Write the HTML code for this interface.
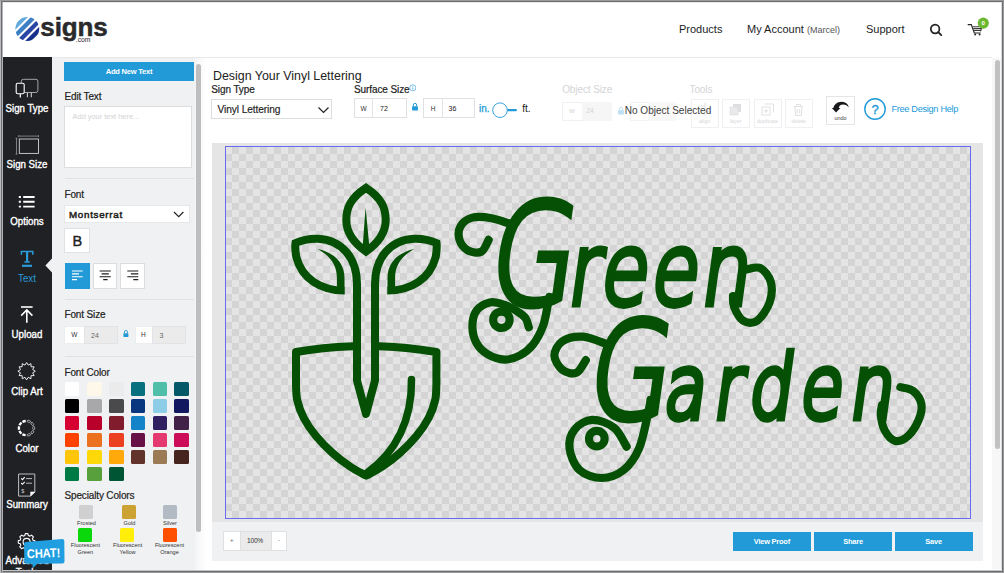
<!DOCTYPE html>
<html lang="en">
<head>
<meta charset="utf-8">
<title>Design Your Vinyl Lettering - Signs.com</title>
<style>
*{box-sizing:border-box;margin:0;padding:0}
html,body{width:1004px;height:573px;overflow:hidden;background:#fff}
body{position:relative;font-family:"Liberation Sans",sans-serif;color:#222;font-size:10px}
.abs{position:absolute}
.fr{z-index:60}
/* window frame */
/* header */
#header{left:2px;top:2px;width:999px;height:56px;background:#fff}
#hline{left:52px;top:57px;width:940px;height:1px;background:#e6e7e9}
.nav{top:22px;font-size:11px;color:#1d1d1f;white-space:nowrap;line-height:14px}
.nav small{font-size:9px;color:#555}
/* sidebar */
#side{left:2px;top:57.300px;width:50px;height:513.300px;background:#1f2125}
.sitem{left:-3px;width:60px;text-align:center;color:#fff;font-size:10px;line-height:12px;white-space:nowrap;-webkit-text-stroke:0.35px #fff;transform:scaleX(0.97)}
.sitem.on{color:#2a9bd8;-webkit-text-stroke:0}
.sicon{left:2px;width:50px}
/* left panel */
#lpanel{left:52px;top:58px;width:152px;height:512px;background:#f0f1f3}
.lbl{left:64.5px;font-size:10px;color:#222;line-height:12px;white-space:nowrap;-webkit-text-stroke:0.2px #222;letter-spacing:-0.15px}
.hr{left:64.500px;width:129px;height:1px;background:#e1e2e4}
.sw{height:14.200px;border-radius:1.500px}
.ssw{width:14px;height:14px;border-radius:1.500px}
.stx{font-size:5.600px;line-height:7px;color:#333;text-align:center;width:40px;white-space:nowrap}
.tl{font-size:10px;line-height:12px;color:#222;white-space:nowrap;-webkit-text-stroke:0.2px #222;letter-spacing:-0.1px}
.tb{top:99.300px;width:28px;height:29px;border:1px solid #f0f0f2;background:#fff}
.tt{top:118.300px;width:28px;text-align:center;font-size:5.300px;line-height:6px;color:#d6d6d8}
.word{-webkit-text-stroke:7px #055005;font-family:"DejaVu Sans","Liberation Sans",sans-serif;font-weight:200;font-style:normal;color:#055005;line-height:1;white-space:nowrap;transform-origin:0 100%;paint-order:stroke fill}
#w1::first-letter{font-size:140px;letter-spacing:-6px}
#w2::first-letter{font-size:134px;letter-spacing:-5px}
/* main */
#mpanel{left:204px;top:58px;width:779px;height:502.500px;background:#fff}
#cwrap{left:212.200px;top:143px;width:770.800px;height:378.500px;background:#e5e5e5}
#board{left:225.400px;top:146px;width:746px;height:373.200px;border:1px solid #6a6af0;
 background-color:#e4e4e4;
 background-image:linear-gradient(45deg,#d4d4d4 25%,transparent 25%,transparent 75%,#d4d4d4 75%),linear-gradient(45deg,#d4d4d4 25%,transparent 25%,transparent 75%,#d4d4d4 75%);
 background-size:14px 14px;background-position:-1px 0,6px 7px}
#bbar{left:212.200px;top:521.500px;width:770.800px;height:39px;background:#f0f1f3}
.btn{top:531.500px;height:19px;background:#219ad7;color:#fff;font-size:7.400px;line-height:19px;text-align:center;font-weight:bold;letter-spacing:-0.200px}
#vtrack{left:992px;top:58px;width:9.500px;height:511px;background:#f7f7f7}
</style>
</head>
<body>
<div id="header" class="abs"></div>
<div id="hline" class="abs"></div>
<div id="side" class="abs"></div>
<div id="lpanel" class="abs"></div>
<div id="mpanel" class="abs"></div>
<div id="cwrap" class="abs"></div>
<div id="board" class="abs"></div>
<div id="bbar" class="abs"></div>
<div id="vtrack" class="abs"></div>
<div class="abs" style="left:995px;top:60px;width:5px;height:389px;border-radius:2.500px;background:#c1c1c1"></div>
<!--HEADER-->
<svg class="abs" style="left:14px;top:16px" width="27" height="27" viewBox="0 0 27 27">
 <defs><clipPath id="lc"><circle cx="13.3" cy="13" r="11.9"/></clipPath></defs>
 <g clip-path="url(#lc)" transform="rotate(-45 13.3 13)">
  <rect x="0" y="0.700" width="27" height="4.300" fill="#62a9dc"/>
  <rect x="0" y="7.100" width="27" height="4.300" fill="#3d7fc4"/>
  <rect x="0" y="13.500" width="27" height="4.300" fill="#2a46a4"/>
  <rect x="0" y="19.900" width="27" height="4.300" fill="#16308c"/>
 </g>
</svg>
<div class="abs" style="left:40.300px;top:12px;font-size:26px;line-height:30px;font-weight:bold;color:#2a2a2c;letter-spacing:-0.100px;-webkit-text-stroke:0.500px #2a2a2c">signs</div>
<div class="abs" style="left:75.800px;top:35.500px;font-size:6.800px;line-height:8px;color:#2a2a2c">.com</div>
<div class="abs nav" style="left:679px">Products</div>
<div class="abs nav" style="left:747px">My Account <small>(Marcel)</small></div>
<div class="abs nav" style="left:866px">Support</div>
<svg class="abs" style="left:929px;top:22.700px" width="15" height="15" viewBox="0 0 15 15"><circle cx="6.100" cy="6" r="4.300" fill="none" stroke="#222" stroke-width="1.700"/><path d="M9.300 9.200 L12.200 12.100" stroke="#222" stroke-width="1.900" stroke-linecap="round"/></svg>
<svg class="abs" style="left:966px;top:17px" width="24" height="22" viewBox="0 0 24 22">
 <path d="M1.700 7.600 H5.300 L8.300 16 H14.600" fill="none" stroke="#222" stroke-width="1.100" stroke-linejoin="miter"/>
 <path d="M6.600 9.700 H16 M7.200 11.500 H15.400 M7.800 13.300 H14.900" stroke="#3a3a3c" stroke-width="1.150"/>
 <path d="M16.100 9.300 L14.600 14.400" stroke="#222" stroke-width="1"/>
 <circle cx="9.200" cy="17.500" r="0.950" fill="#222"/><circle cx="13.600" cy="17.500" r="0.950" fill="#222"/>
 <circle cx="17.300" cy="6.100" r="5.600" fill="#6cb830"/>
 <text x="17.300" y="8.300" font-family="Liberation Sans, sans-serif" font-size="6.200" font-weight="bold" fill="#fff" text-anchor="middle">0</text>
</svg>
<!--SIDEBAR-->
<svg class="abs" style="left:0;top:58px" width="54" height="515" viewBox="0 58 54 515" fill="none" stroke="#fff">
 <!-- sign type -->
 <rect x="21.300" y="79.300" width="16.600" height="13.200" rx="2" stroke-width="0.900" stroke="#b4b4b6"/>
 <rect x="16.2" y="83.3" width="8" height="10.4" rx="1.5" stroke-width="1.1" fill="#1f2125"/>
 <path d="M20.300 94v3.600" stroke-width="1.200"/><path d="M27.400 92.800v4.400 M31.300 92.800v4.400" stroke-width="1.100" stroke="#d0d0d2"/>
 <!-- sign size -->
 <rect x="19.300" y="139" width="19.200" height="14.400" stroke-width="0.900" stroke="#d4d4d6"/>
 <path d="M18.600 136.100h20 M16.500 138.200v16" stroke-width="0.600" stroke="#bdbdbf"/><path d="M18.700 135v2.200 M38.500 135v2.200 M15.400 138.300h2.200 M15.400 154.100h2.200" stroke-width="0.500" stroke="#bdbdbf"/>
 <!-- options -->
 <path d="M23.2 197h11.4 M23.2 201.8h11.4 M23.2 206.6h11.4" stroke-width="1.9"/>
 <path d="M18.8 197h2.1 M18.8 201.8h2.1 M18.8 206.6h2.1" stroke-width="1.9"/>
 <!-- text -->
 <path d="M21.400 254.800v-3.300h11.400v3.300 M24.400 262h5.400" stroke="#2a9bd8" stroke-width="1.500"/><path d="M27.100 251.300v10.600" stroke="#2a9bd8" stroke-width="2.200"/>
 <path d="M22 265.8h10" stroke="#2a9bd8" stroke-width="2.2"/>
 <path d="M52 258.5 L45.4 265.5 L52 272.5Z" fill="#f0f1f3" stroke="none"/>
 <!-- upload -->
 <path d="M21 307h11.6" stroke-width="1.6"/>
 <path d="M26.8 322.8v-12 M21.2 315.6l5.6-5.6 5.6 5.6" stroke-width="1.6"/>
 <!-- clip art -->
 <path d="M26.60 362.50 L28.23 365.11 L30.95 363.67 L31.05 366.75 L34.13 366.85 L32.69 369.57 L35.30 371.20 L32.69 372.83 L34.13 375.55 L31.05 375.65 L30.95 378.73 L28.23 377.29 L26.60 379.90 L24.97 377.29 L22.25 378.73 L22.15 375.65 L19.07 375.55 L20.51 372.83 L17.90 371.20 L20.51 369.57 L19.07 366.85 L22.15 366.75 L22.25 363.67 L24.97 365.11Z" stroke-width="0.900" stroke-linejoin="miter"/>
 <!-- color -->
 <path d="M26.00 421.00 A7.10 7.10 0 0 0 26.00 435.20" stroke-width="2.300" stroke-dasharray="3.400 1.120" stroke-dashoffset="-0.300"/>
 <ellipse cx="28.79" cy="421.35" rx="1.75" ry="1.05" transform="rotate(18.0 28.79 421.35)" stroke-width="0.600" stroke="#e8e8e8"/><ellipse cx="32.34" cy="423.93" rx="1.75" ry="1.05" transform="rotate(54.0 32.34 423.93)" stroke-width="0.600" stroke="#e8e8e8"/><ellipse cx="33.70" cy="428.10" rx="1.75" ry="1.05" transform="rotate(90.0 33.70 428.10)" stroke-width="0.600" stroke="#e8e8e8"/><ellipse cx="32.34" cy="432.27" rx="1.75" ry="1.05" transform="rotate(126.0 32.34 432.27)" stroke-width="0.600" stroke="#e8e8e8"/><ellipse cx="28.79" cy="434.85" rx="1.75" ry="1.05" transform="rotate(162.0 28.79 434.85)" stroke-width="0.600" stroke="#e8e8e8"/>
 <!-- summary -->
 <path d="M18.600 474h16.200v17.900l-4.200 4.200h-12z" stroke-width="0.900" stroke="#cfcfd1"/>
 <path d="M30.600 496.100v-4.200h4.200z" fill="#fff" stroke-width="0.500"/>
 <path d="M26 478.600h6 M26 483.200h6" stroke-width="0.800" stroke="#e0e0e0"/>
 <path d="M21.200 478.400l1.300 1.300 2.200-2.500 M21.200 483l1.300 1.300 2.200-2.500" stroke-width="1.100"/>
 <text x="21.200" y="492.600" font-family="Liberation Sans, sans-serif" font-size="5.500" fill="#cfcfd1" stroke="none">$</text>
 <!-- gear -->
 <path d="M34.90 540.59 L34.90 543.21 L33.09 543.57 L32.37 545.31 L33.40 546.84 L31.54 548.70 L30.01 547.67 L28.27 548.39 L27.91 550.20 L25.29 550.20 L24.93 548.39 L23.19 547.67 L21.66 548.70 L19.80 546.84 L20.83 545.31 L20.11 543.57 L18.30 543.21 L18.30 540.59 L20.11 540.23 L20.83 538.49 L19.80 536.96 L21.66 535.10 L23.19 536.13 L24.93 535.41 L25.29 533.60 L27.91 533.60 L28.27 535.41 L30.01 536.13 L31.54 535.10 L33.40 536.96 L32.37 538.49 L33.09 540.23Z" stroke-width="1.100" stroke-linejoin="round"/>
 <circle cx="26.600" cy="541.900" r="3.500" stroke-width="1.100"/>
</svg>
<div class="abs sitem" style="top:102.5px">Sign Type</div>
<div class="abs sitem" style="top:159.0px">Sign Size</div>
<div class="abs sitem" style="top:215.5px">Options</div>
<div class="abs sitem on" style="top:272.5px;font-weight:normal">Text</div>
<div class="abs sitem" style="top:329.0px">Upload</div>
<div class="abs sitem" style="top:385.5px">Clip Art</div>
<div class="abs sitem" style="top:442.5px">Color</div>
<div class="abs sitem" style="top:499.0px">Summary</div>
<div class="abs sitem" style="top:554.800px">Advanced<br>Tools</div>
<div class="abs" id="chat" style="left:22px;top:536px;width:46px;height:35px;z-index:5">
 <svg width="46" height="35" viewBox="22 536 46 35"><path d="M25.800 542.100 L62.200 539.100 Q64.200 539 64.300 541 L64.500 561.600 Q64.500 563.600 62.500 563.600 L37.200 563.700 L32.800 568.300 L32.400 563.700 L26.300 563.700 Q24.300 563.700 24.300 561.700 L24.100 544 Q24.100 542.200 25.800 542.100Z" fill="#219ee0"/>
 <text x="43.500" y="557.600" font-family="Liberation Sans, sans-serif" font-size="12.600" font-weight="bold" fill="#fff" text-anchor="middle" textLength="33.500" lengthAdjust="spacingAndGlyphs" transform="rotate(-2 43.500 553)">CHAT!</text></svg>
</div>
<!--LEFT-->
<div class="abs" style="left:194.500px;top:58px;width:10px;height:512px;background:linear-gradient(90deg,#f3f4f5,#f9f9fa 40%,#fdfdfd)"></div>
<div class="abs" style="left:196px;top:63.500px;width:5px;height:468px;border-radius:2.500px;background:#bebebe"></div>
<div class="abs" style="left:64px;top:62px;width:130px;height:19px;background:#219ad7;color:#fff;font-size:7.500px;line-height:19px;font-weight:bold;text-align:center;letter-spacing:-0.200px">Add New Text</div>
<div class="abs lbl" style="top:91px">Edit Text</div>
<div class="abs" style="left:64.200px;top:106.300px;width:127.600px;height:62.200px;background:#fff;border:1px solid #dcdddf"></div>
<div class="abs" style="left:72.600px;top:111.500px;font-size:7.400px;line-height:9px;color:#d2d2d4;white-space:nowrap">Add your text here...</div>
<div class="abs hr" style="top:178px"></div>
<div class="abs lbl" style="top:189px">Font</div>
<div class="abs" style="left:64.300px;top:204.700px;width:126px;height:18.700px;background:#fff;border:1px solid #e6e7e9"></div>
<div class="abs" style="left:69px;top:208.500px;font-size:9.800px;line-height:12px;color:#222;-webkit-text-stroke:0.500px #222;letter-spacing:0.700px">Montserrat</div>
<svg class="abs" style="left:172px;top:209px" width="14" height="10" viewBox="0 0 14 10"><path d="M2 3 L6.700 7.600 L11.400 3" fill="none" stroke="#222" stroke-width="1.200"/></svg>
<div class="abs" style="left:64.300px;top:228.300px;width:25.500px;height:25px;background:#fff;border:1px solid #e0e1e3"></div>
<div class="abs" style="left:64.500px;top:232.500px;width:25.500px;text-align:center;font-size:14.500px;line-height:17px;color:#222;-webkit-text-stroke:0.400px #222">B</div>
<div class="abs" style="left:64.500px;top:263px;width:25.500px;height:25.500px;background:#219ad7"></div>
<div class="abs" style="left:92.800px;top:263px;width:24.700px;height:25.500px;background:#fff;border:1px solid #dcdddf"></div>
<div class="abs" style="left:120.400px;top:263px;width:24.700px;height:25.500px;background:#fff;border:1px solid #dcdddf"></div>
<svg class="abs" style="left:64px;top:262px" width="84" height="28" viewBox="64 262 84 28" fill="none" stroke-width="1.150">
 <path d="M72 271h10.700 M72 273.850h7 M72 276.700h10.700 M72 279.550h5" stroke="#fff"/>
 <path d="M99.600 271h11.200 M101.600 273.850h7.200 M99.600 276.700h11.200 M103.200 279.550h4.400" stroke="#1c1c1e"/>
 <path d="M127.300 271h11 M130.900 273.850h7.400 M127.300 276.700h11 M133.300 279.550h5" stroke="#1c1c1e"/>
</svg>
<div class="abs hr" style="top:298.500px"></div>
<div class="abs lbl" style="top:308.500px">Font Size</div>
<div class="abs" style="left:64.300px;top:325.800px;width:19.700px;height:18.700px;background:#fff;border:1px solid #ecedef;border-right:0"></div>
<div class="abs" style="left:84px;top:325.800px;width:33.700px;height:18.700px;background:#ebebeb;border:1px solid #e2e3e5"></div>
<div class="abs" style="left:64.500px;top:331px;width:19.500px;text-align:center;font-size:6.500px;line-height:8px;color:#333">W</div>
<div class="abs" style="left:91px;top:331.500px;font-size:7px;line-height:8px;color:#666">24</div>
<svg class="abs" style="left:121.800px;top:329.300px" width="8" height="9.600" viewBox="0 0 10 12"><path d="M3 5.500v-1.800a1.900 1.900 0 0 1 3.800 0v1.800" fill="none" stroke="#219ad7" stroke-width="1.100"/><rect x="1.800" y="5.300" width="6.200" height="4.700" rx="0.600" fill="#219ad7"/></svg>
<div class="abs" style="left:134.500px;top:325.800px;width:17.500px;height:18.700px;background:#fff;border:1px solid #ecedef;border-right:0"></div>
<div class="abs" style="left:152px;top:325.800px;width:33.700px;height:18.700px;background:#ebebeb;border:1px solid #e2e3e5"></div>
<div class="abs" style="left:134.700px;top:331px;width:17.500px;text-align:center;font-size:6.500px;line-height:8px;color:#333">H</div>
<div class="abs" style="left:159.500px;top:331.500px;font-size:7px;line-height:8px;color:#666">3</div>
<div class="abs hr" style="top:356px"></div>
<div class="abs lbl" style="top:366.600px">Font Color</div>
<div class="abs sw" style="left:65.0px;top:381.8px;width:14.0px;background:#ffffff"></div>
<div class="abs sw" style="left:87.0px;top:381.8px;width:15.0px;background:#fef8ea"></div>
<div class="abs sw" style="left:109.1px;top:381.8px;width:15.0px;background:#ebebeb"></div>
<div class="abs sw" style="left:131.0px;top:381.8px;width:13.7px;background:#07707f"></div>
<div class="abs sw" style="left:153.0px;top:381.8px;width:14.0px;background:#50bfa9"></div>
<div class="abs sw" style="left:174.3px;top:381.8px;width:14.5px;background:#045868"></div>
<div class="abs sw" style="left:65.0px;top:398.9px;width:14.0px;background:#000000"></div>
<div class="abs sw" style="left:87.0px;top:398.9px;width:15.0px;background:#a8a8aa"></div>
<div class="abs sw" style="left:109.1px;top:398.9px;width:15.0px;background:#4a4a4d"></div>
<div class="abs sw" style="left:131.0px;top:398.9px;width:13.7px;background:#08377f"></div>
<div class="abs sw" style="left:153.0px;top:398.9px;width:14.0px;background:#8ecde8"></div>
<div class="abs sw" style="left:174.3px;top:398.9px;width:14.5px;background:#12185f"></div>
<div class="abs sw" style="left:65.0px;top:415.9px;width:14.0px;background:#d60032"></div>
<div class="abs sw" style="left:87.0px;top:415.9px;width:15.0px;background:#b8002a"></div>
<div class="abs sw" style="left:109.1px;top:415.9px;width:15.0px;background:#801c2b"></div>
<div class="abs sw" style="left:131.0px;top:415.9px;width:13.7px;background:#1583c8"></div>
<div class="abs sw" style="left:153.0px;top:415.9px;width:14.0px;background:#301f60"></div>
<div class="abs sw" style="left:174.3px;top:415.9px;width:14.5px;background:#412148"></div>
<div class="abs sw" style="left:65.0px;top:432.8px;width:14.0px;background:#ff4200"></div>
<div class="abs sw" style="left:87.0px;top:432.8px;width:15.0px;background:#eb7020"></div>
<div class="abs sw" style="left:109.1px;top:432.8px;width:15.0px;background:#eb4120"></div>
<div class="abs sw" style="left:131.0px;top:432.8px;width:13.7px;background:#681146"></div>
<div class="abs sw" style="left:153.0px;top:432.8px;width:14.0px;background:#e43870"></div>
<div class="abs sw" style="left:174.3px;top:432.8px;width:14.5px;background:#cc0c58"></div>
<div class="abs sw" style="left:65.0px;top:449.9px;width:14.0px;background:#ffc508"></div>
<div class="abs sw" style="left:87.0px;top:449.9px;width:15.0px;background:#ffd80a"></div>
<div class="abs sw" style="left:109.1px;top:449.9px;width:15.0px;background:#ffa90a"></div>
<div class="abs sw" style="left:131.0px;top:449.9px;width:13.7px;background:#62332a"></div>
<div class="abs sw" style="left:153.0px;top:449.9px;width:14.0px;background:#9b7b55"></div>
<div class="abs sw" style="left:174.3px;top:449.9px;width:14.5px;background:#46251e"></div>
<div class="abs sw" style="left:65.0px;top:467.1px;width:14.0px;background:#007a45"></div>
<div class="abs sw" style="left:87.0px;top:467.1px;width:15.0px;background:#58a03c"></div>
<div class="abs sw" style="left:109.1px;top:467.1px;width:15.0px;background:#005535"></div>
<div class="abs lbl" style="top:490px">Specialty Colors</div>
<div class="abs ssw" style="left:79.400px;top:505.200px;background:#d0d0d0"></div>
<div class="abs ssw" style="left:122.400px;top:505.200px;background:#cca232"></div>
<div class="abs ssw" style="left:163.300px;top:505.200px;background:#b2bbc4"></div>
<div class="abs ssw" style="left:78.300px;top:527.500px;background:#0ad80a"></div>
<div class="abs ssw" style="left:120.400px;top:527.500px;background:#ffee0a"></div>
<div class="abs ssw" style="left:163px;top:527.500px;background:#ff5000"></div>
<div class="abs stx" style="left:66.500px;top:519.500px">Frosted</div>
<div class="abs stx" style="left:109.500px;top:519.500px">Gold</div>
<div class="abs stx" style="left:150px;top:519.500px">Silver</div>
<div class="abs stx" style="left:65.400px;top:541.500px">Fluorescent<br>Green</div>
<div class="abs stx" style="left:107.600px;top:541.500px">Fluorescent<br>Yellow</div>
<div class="abs stx" style="left:149.500px;top:541.500px">Fluorescent<br>Orange</div>
<!--TOOLBAR-->
<div class="abs" id="title" style="left:213px;top:69px;font-size:12.400px;line-height:15px;color:#222;white-space:nowrap">Design Your Vinyl Lettering</div>
<div class="abs tl" style="left:211.300px;top:84px">Sign Type</div>
<div class="abs" style="left:211.300px;top:99.300px;width:120.500px;height:20.200px;background:#fff;border:1px solid #dcdddf"></div>
<div class="abs" id="vl" style="left:217.500px;top:103.500px;font-size:10.200px;line-height:12px;color:#222;white-space:nowrap;letter-spacing:-0.100px;-webkit-text-stroke:0.150px #222">Vinyl Lettering</div>
<svg class="abs" style="left:316px;top:104px" width="15" height="12" viewBox="0 0 15 12"><path d="M2.500 3.500 L7.500 8.500 L12.500 3.500" fill="none" stroke="#222" stroke-width="1.200"/></svg>
<div class="abs tl" style="left:354px;top:84px">Surface Size</div>
<svg class="abs" style="left:408.500px;top:84px" width="7.600" height="7.600" viewBox="0 0 8 8"><circle cx="4" cy="4" r="3.200" fill="none" stroke="#3a9fdb" stroke-width="0.700"/><path d="M4 3.500v2.300 M4 2v0.800" stroke="#3a9fdb" stroke-width="0.800"/></svg>
<div class="abs" style="left:353.500px;top:98.400px;width:53px;height:19.400px;background:#fff;border:1px solid #dfe0e2"></div>
<div class="abs" style="left:372.300px;top:98.400px;width:1px;height:19.400px;background:#e4e5e7"></div>
<div class="abs" style="left:354px;top:104.500px;width:19px;text-align:center;font-size:6.500px;line-height:8px;color:#333">W</div>
<div class="abs" style="left:380px;top:104.500px;font-size:7px;line-height:8px;color:#222">72</div>
<svg class="abs" style="left:411px;top:102px" width="8" height="10" viewBox="0 0 8 10"><path d="M2.300 4.500v-1.400a1.700 1.700 0 0 1 3.400 0v1.400" fill="none" stroke="#219ad7" stroke-width="1"/><rect x="1.100" y="4.300" width="5.800" height="4.300" rx="0.500" fill="#219ad7"/></svg>
<div class="abs" style="left:423px;top:98.400px;width:52px;height:19.400px;background:#fff;border:1px solid #dfe0e2"></div>
<div class="abs" style="left:441.800px;top:98.400px;width:1px;height:19.400px;background:#e4e5e7"></div>
<div class="abs" style="left:423.500px;top:104.500px;width:19px;text-align:center;font-size:6.500px;line-height:8px;color:#333">H</div>
<div class="abs" style="left:448.500px;top:104.500px;font-size:7px;line-height:8px;color:#222">36</div>
<div class="abs" style="left:479px;top:103px;font-size:10px;line-height:12px;color:#219ad7;-webkit-text-stroke:0.250px #219ad7">in.</div>
<svg class="abs" style="left:490px;top:100px" width="30" height="20" viewBox="490 100 30 20"><path d="M506 110.200h9.800" stroke="#219ad7" stroke-width="2.300" stroke-linecap="round"/><circle cx="500" cy="110.200" r="7.300" fill="#fff" stroke="#3aa5dc" stroke-width="1"/></svg>
<div class="abs" style="left:522.200px;top:103px;font-size:10px;line-height:12px;color:#222">ft.</div>
<!-- disabled object size -->
<div class="abs tl" style="left:562.200px;top:84px;color:#d4d4d6;-webkit-text-stroke:0">Object Size</div>
<div class="abs" style="left:562px;top:101.500px;width:49.500px;height:19px;background:#fff;border:1px solid #f1f1f2"></div>
<div class="abs" style="left:581.500px;top:101.500px;width:30px;height:19px;background:#f6f6f6"></div>
<div class="abs" style="left:562px;top:107px;width:19.500px;text-align:center;font-size:6px;line-height:8px;color:#d0d0d0">W</div>
<div class="abs" style="left:586.500px;top:107px;font-size:6.500px;line-height:8px;color:#d4d4d4">24</div>
<svg class="abs" style="left:616.500px;top:105.500px" width="8" height="10" viewBox="0 0 8 10" opacity="0.300"><path d="M2.300 4.500v-1.400a1.700 1.700 0 0 1 3.400 0v1.400" fill="none" stroke="#219ad7" stroke-width="1"/><rect x="1.100" y="4.300" width="5.800" height="4.300" rx="0.500" fill="#219ad7"/></svg>
<div class="abs" style="left:630px;top:101.500px;width:46px;height:19px;background:#fff;border:1px solid #f3f3f4"></div>
<div class="abs" style="left:648px;top:101.500px;width:28px;height:19px;background:#f8f8f8"></div>
<div class="abs tl" style="left:689.500px;top:84px;color:#d4d4d6;-webkit-text-stroke:0">Tools</div>
<div class="abs tb" style="left:690.500px"></div><div class="abs tb" style="left:721.700px"></div><div class="abs tb" style="left:753.500px"></div><div class="abs tb" style="left:784.800px"></div>
<svg class="abs" style="left:691px;top:99px" width="122" height="29" viewBox="691 99 122 29" fill="none" stroke="#e1e1e3" stroke-width="1">
 <path d="M705 102.500v13 M700 106h5 M705 111.500h6"/>
 <rect x="733" y="104" width="8" height="8" fill="#dedee0" stroke="none"/><rect x="730" y="107" width="8" height="8" fill="#e9e9eb" stroke="#dcdcde" stroke-width="0.600"/>
 <rect x="762" y="107" width="8" height="8"/><path d="M765 104h8.500v8.500 M766 111h0 M764 111h4 M766 109v4"/>
 <path d="M794 106.500h9 M796.500 106.500v-2h4v2 M795 107l0.600 8.500h5.800l0.600-8.500 M797.300 109v4.500 M799.700 109v4.500"/>
</svg>
<div class="abs tt" style="left:690.500px">align</div><div class="abs tt" style="left:721.700px">layer</div><div class="abs tt" style="left:753.500px">duplicate</div><div class="abs tt" style="left:784.800px">delete</div>
<div class="abs" id="nos" style="left:624.700px;top:104.500px;font-size:10.050px;line-height:12px;color:#3e3e40;white-space:nowrap">No Object Selected</div>
<!-- undo -->
<div class="abs" style="left:826.300px;top:96.300px;width:28.500px;height:29.200px;background:#fff;border:1px solid #e4e5e7"></div>
<svg class="abs" style="left:828px;top:98px" width="26" height="18" viewBox="828 98 26 18"><path d="M833.400 108.600 C833.600 103.300 840 100.300 845 102.400 C847.500 103.600 848.700 105.800 848.700 107.400 C847.500 105.700 845.500 104.500 843.300 104.500 C840.500 104.500 838.800 106 838.800 108.600 Z" fill="#1a1a1c"/><path d="M831.800 108.100 L840.400 108.100 L836 112.500 Z" fill="#1a1a1c"/></svg>
<div class="abs" style="left:826.300px;top:114.800px;width:28.500px;text-align:center;font-size:5.500px;line-height:6px;color:#444">undo</div>
<!-- help -->
<svg class="abs" style="left:862.700px;top:96.500px" width="24" height="24" viewBox="0 0 24 24"><circle cx="12" cy="12" r="10.200" fill="#fff" stroke="#219ad7" stroke-width="1.400"/><text x="12" y="16.600" font-family="Liberation Sans, sans-serif" font-size="13" fill="#219ad7" stroke="#219ad7" stroke-width="0.400" text-anchor="middle">?</text></svg>
<div class="abs" id="fdh" style="left:891.400px;top:102.500px;font-size:9.200px;line-height:12px;color:#219ad7;white-space:nowrap;letter-spacing:-0.300px">Free Design Help</div>
<!--ART-->
<svg class="abs" id="art" style="left:226px;top:146px" width="746" height="374" viewBox="226 146 746 374" fill="none" stroke="#055005" stroke-width="8" stroke-linejoin="round" stroke-linecap="round">
<g id="shovel">
 <!-- top leaf -->
 <path d="M366 187.800 C349.500 198.500 346.300 209 346.300 220 C346.300 231 351 241 366 251.500 C381 241 385.700 231 385.700 220 C385.700 209 382.500 198.500 366 187.800Z" stroke-linejoin="miter"/>
 <path d="M365.600 207.500 L369.300 246 L366 249 L362.700 246Z" fill="#055005" stroke="none"/>
 <!-- left leaf + stem -->
 <path d="M344.500 290.600 C321 290.600 302 279 296.300 257 C295.300 251 295 246 295.500 243 C303 239.500 311 238.500 318 238.700 C342 240 357 258 357 284 L357 379" stroke-linejoin="miter" stroke-linecap="butt"/>
 <path d="M387.500 290.600 C411 290.600 430 279 435.700 257 C436.700 251 437 246 436.500 243 C429 239.500 421 238.500 414 238.700 C390 240 375 258 375 284 L375 379" stroke-linejoin="miter" stroke-linecap="butt"/>
 <path d="M357 378 L357 380.500 L366 414 L375 380.500 L375 378" stroke-linejoin="round" stroke-linecap="butt"/>
 <path d="M344.500 294.600 L344.500 278 C344.500 262 333 252 317.400 249 C329 255 336.900 264 336.900 278 L336.900 290Z" fill="#055005" stroke="none"/>
 <path d="M387.500 294.600 L387.500 278 C387.500 262 399 252 414.600 249 C403 255 395.100 264 395.100 278 L395.100 290Z" fill="#055005" stroke="none"/>
 <!-- blade -->
 <path d="M353 346.200 C333 347 313 349 296 352 L296 384 C296.2 386.7 295.9 394.3 297.2 400.0 C298.5 405.7 300.7 412.0 303.8 418.0 C306.9 424.0 311.2 430.2 316.0 436.0 C320.8 441.8 326.8 447.9 332.5 453.0 C338.2 458.1 344.4 462.7 350.0 466.5 C355.6 470.3 363.5 474.1 366.2 475.6 C368.9 474.1 376.8 470.3 382.4 466.5 C388.0 462.7 394.2 458.1 399.9 453.0 C405.6 447.9 411.6 441.8 416.4 436.0 C421.2 430.2 425.5 424.0 428.6 418.0 C431.7 412.0 433.9 405.7 435.2 400.0 C436.5 394.3 436.2 386.7 436.4 384.0 L436.400 352 C419 349 399 347 379 346.200" stroke-linejoin="round"/>
 <path d="M411.500 379.500 C412 420 396 452 368 472" stroke-width="7.500"/>
</g>
<g id="flourish" stroke-width="8.200">
 <path d="M488.6 239.9 C487.4 241.9 484.7 250.1 481.2 251.8 C477.7 253.5 471.4 252.3 467.8 250.3 C464.2 248.3 460.7 243.9 459.5 239.9 C458.3 235.9 458.3 230.2 460.4 226.5 C462.5 222.8 467.1 219.0 472.3 217.6 C477.5 216.2 484.6 216.9 491.5 218.2 C498.4 219.4 510.1 223.9 513.8 225.1"/>
 <path d="M549.5 297.0 C549.2 298.3 548.9 300.0 547.8 304.9 C546.7 309.8 545.4 319.8 542.9 326.4 C540.4 333.0 536.8 339.8 532.9 344.7 C529.0 349.6 524.4 353.0 519.7 355.5 C515.0 358.0 510.0 359.8 504.7 359.6 C499.4 359.5 492.8 357.4 488.1 354.6 C483.4 351.8 479.1 347.7 476.5 343.0 C473.9 338.3 472.4 331.8 472.4 326.4 C472.4 321.0 473.6 314.7 476.5 310.7 C479.4 306.7 485.1 303.4 489.8 302.4 C494.5 301.4 500.3 303.5 504.7 304.9 C509.1 306.3 512.8 308.5 516.3 310.7 C519.8 312.9 523.4 315.3 525.5 318.1 C527.6 320.9 528.2 325.8 528.8 327.3"/>
 <circle cx="501.400" cy="319.800" r="8.200"/>
 <path d="M585.8 360.2 C584.2 362.3 580.3 371.2 576.4 372.8 C572.5 374.4 566.0 372.6 562.3 369.7 C558.6 366.8 554.4 360.2 554.4 355.5 C554.4 350.8 557.6 344.5 562.3 341.4 C567.0 338.3 575.1 336.2 582.7 336.7 C590.3 337.2 603.6 343.2 607.8 344.5"/>
 <path d="M650.5 400.0 C650.2 401.8 650.5 402.5 648.6 410.5 C646.7 418.5 643.4 438.2 639.2 448.1 C635.0 458.0 629.8 465.1 623.5 470.1 C617.2 475.1 608.8 478.0 601.5 478.0 C594.2 478.0 584.8 475.1 579.5 470.1 C574.2 465.1 570.3 454.9 569.5 448.1 C568.7 441.3 571.0 434.0 574.8 429.3 C578.6 424.6 585.5 420.2 592.1 419.9 C598.7 419.6 608.4 423.2 614.1 427.7 C619.9 432.1 624.5 443.5 626.6 446.6"/>
 <circle cx="596.800" cy="438.700" r="7.800"/>
 <path d="M733.0 296.0 C733.2 297.8 732.4 302.9 734.1 307.0 C735.8 311.1 739.5 318.5 743.3 320.8 C747.1 323.1 752.6 323.9 757.0 320.8 C761.4 317.8 767.3 309.0 769.6 302.5 C771.9 296.0 772.3 287.6 770.8 281.9 C769.3 276.2 764.5 270.2 760.5 268.1 C756.5 266.0 749.0 269.1 746.7 269.3"/>
 <path d="M882.0 405.0 C881.8 406.6 880.3 410.5 880.8 414.7 C881.2 418.9 882.3 426.0 884.7 430.4 C887.1 434.8 891.3 440.0 895.2 440.9 C899.1 441.8 904.4 439.2 908.3 435.7 C912.2 432.2 916.5 425.1 918.7 419.9 C920.9 414.6 922.3 409.0 921.4 404.2 C920.5 399.4 917.0 394.0 913.5 391.2 C910.0 388.4 902.6 387.9 900.4 387.2"/>
</g>
</svg>
<div class="abs word" id="w1" style="left:483px;top:186px;font-size:98px;letter-spacing:4px;transform:scaleX(0.78) skewX(-10deg)">Green</div>
<div class="abs word" id="w2" style="left:582px;top:305px;font-size:88px;letter-spacing:10px;transform:scaleX(0.78) skewX(-10deg)">Garden</div>
<!--BOTTOM-->
<div class="abs" style="left:222.900px;top:531px;width:63.700px;height:19.600px;background:#fff;border:1px solid #dfe0e2"></div>
<div class="abs" style="left:240px;top:531px;width:31.800px;height:19.600px;background:#ebebeb;border:1px solid #dfe0e2"></div>
<div class="abs" style="left:223.200px;top:536px;width:17px;text-align:center;font-size:6px;line-height:8px;color:#666">+</div>
<div class="abs" style="left:239.500px;top:536px;width:31px;text-align:center;font-size:6.600px;line-height:9px;color:#333;letter-spacing:-0.200px">100%</div>
<div class="abs" style="left:271.500px;top:536px;width:15px;text-align:center;font-size:6px;line-height:8px;color:#666">-</div>
<div class="abs btn" style="left:733px;width:77.800px">View Proof</div>
<div class="abs btn" style="left:814.200px;width:77.700px">Share</div>
<div class="abs btn" style="left:894.500px;width:78.200px">Save</div>
<div class="abs fr" style="left:0;top:570px;width:1004px;height:1px;background:#c4c4c6"></div>
<div class="abs fr" style="left:0;top:571px;width:1004px;height:1px;background:#6c6d70"></div>
<div class="abs fr" style="left:0;top:572px;width:1004px;height:1px;background:#98999b"></div>
<div class="abs fr" style="left:0;top:2px;width:1004px;height:1px;background:#e9e9ea"></div>
<div class="abs fr" style="left:2px;top:0;width:1px;height:572px;background:#b4b4b6"></div>
<div class="abs fr" style="left:1001px;top:0;width:1px;height:571px;background:#dcdcde"></div>
<div class="abs fr" style="left:1px;top:0;width:1px;height:572px;background:#6c6d70"></div>
<div class="abs fr" style="left:1002px;top:0;width:1px;height:572px;background:#6c6d70"></div>
<div class="abs fr" style="left:1003px;top:0;width:1px;height:573px;background:#98999b"></div>
<div class="abs fr" style="left:0;top:0;width:1px;height:573px;background:#bcbcbe"></div>
<div class="abs fr" style="left:1px;top:1px;width:1002px;height:1px;background:#6c6d70"></div>
<div class="abs fr" style="left:0;top:0;width:1004px;height:1px;background:#98999b"></div>
</body>
</html>
